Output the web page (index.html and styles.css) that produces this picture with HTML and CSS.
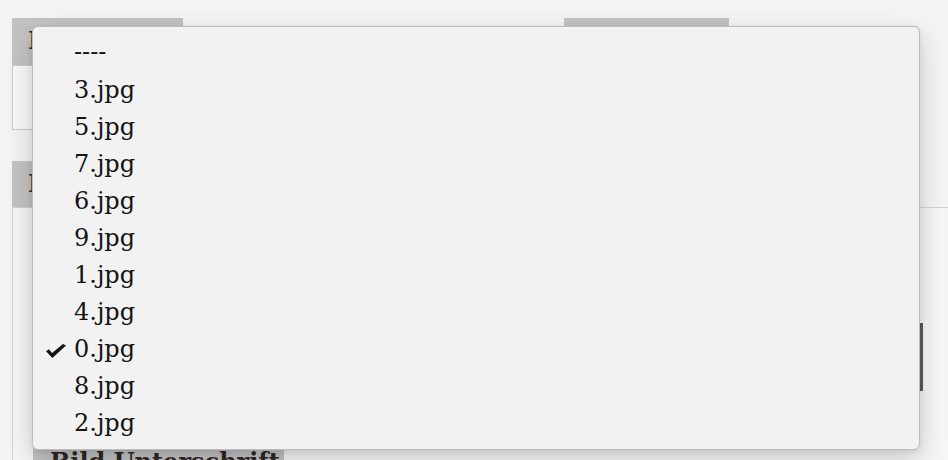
FILE: index.html
```html
<!DOCTYPE html>
<html lang="de">
<head>
<meta charset="utf-8">
<title>Bild auswählen</title>
<link rel="stylesheet" href="styles.css">
</head>
<body>
<div class="page">
  <div class="row1">
    <div class="field">
      <div class="label label-short">Bild</div>
      <div class="input"></div>
    </div>
    <div class="field">
      <div class="label label-right">Titel</div>
      <div class="input input-right"></div>
    </div>
  </div>
  <div class="section">
    <div class="label label-mid">Datei</div>
    <div class="box">
      <div class="upload-row">
        <div class="dark-btn"></div>
      </div>
      <div class="label label-caption">Bild Unterschrift</div>
    </div>
  </div>

  <ul class="menu">
    <li class="item item-first"><span class="check"></span><span>----</span></li>
    <li class="item"><span class="check"></span><span>3.jpg</span></li>
    <li class="item"><span class="check"></span><span>5.jpg</span></li>
    <li class="item"><span class="check"></span><span>7.jpg</span></li>
    <li class="item"><span class="check"></span><span>6.jpg</span></li>
    <li class="item"><span class="check"></span><span>9.jpg</span></li>
    <li class="item"><span class="check"></span><span>1.jpg</span></li>
    <li class="item"><span class="check"></span><span>4.jpg</span></li>
    <li class="item selected"><span class="check"><svg width="20" height="14" viewBox="0 0 20 14"><path d="M0 7.2 L3 5.3 L6 9.1 L17 0 L20 1.4 L6.4 14 Z" fill="#141414"/></svg></span><span>0.jpg</span></li>
    <li class="item"><span class="check"></span><span>8.jpg</span></li>
    <li class="item"><span class="check"></span><span>2.jpg</span></li>
  </ul>
</div>
</body>
</html>
```

FILE: styles.css
```css
html, body {
  margin: 0;
  padding: 0;
  width: 948px;
  height: 460px;
  overflow: hidden;
  background: #f4f4f4;
  font-family: "DejaVu Serif", "Liberation Serif", serif;
  color: #2f2828;
}

.page {
  position: relative;
  padding: 18px 0 0 12px;
}

.row1 {
  display: grid;
  grid-template-columns: 552px 384px;
}

.field {
  display: flex;
  flex-direction: column;
}

.label {
  background: #c3c3c3;
  font-size: 24px;
  font-weight: bold;
  line-height: 46px;
  height: 46px;
  padding: 0 16px;
  box-sizing: border-box;
  overflow: hidden;
  white-space: nowrap;
}

.label-short {
  width: 171px;
  height: 47px;
}

.label-right {
  width: 165px;
  height: 47px;
}

.label-mid {
  width: 171px;
}

.input {
  height: 65px;
  width: 500px;
  background: #f9f9f9;
  border: 1px solid #cdcdcd;
  box-sizing: border-box;
}

.input-right {
  width: 320px;
}

.section {
  margin-top: 31px;
}

.box {
  box-sizing: border-box;
  width: 942px;
  padding: 0 31px 0 20px;
  height: 260px;
  border: 1px solid #d2d2d2;
  border-right: none;
  background: #f6f6f6;
}

.upload-row {
  display: flex;
  justify-content: flex-end;
  margin-top: 115px;
}

.dark-btn {
  width: 220px;
  height: 68px;
  background: #615859;
}

.label-caption {
  margin-top: 54px;
  width: 251px;
  padding: 3px 17px 0;
  line-height: 28px;
  height: 46px;
}

.menu {
  position: absolute;
  left: 32px;
  top: 26px;
  width: 888px;
  height: 424px;
  box-sizing: border-box;
  margin: 0;
  padding: 6px 0 0 0;
  list-style: none;
  background: #f2f2f2;
  border: 1px solid #bcbcbc;
  border-radius: 6px;
  box-shadow: 0 10px 28px rgba(0, 0, 0, 0.18), 0 2px 6px rgba(0, 0, 0, 0.08);
  font-family: "DejaVu Serif", "Liberation Serif", serif;
  font-size: 24px;
  color: #141414;
}

.item {
  display: flex;
  align-items: center;
  height: 37px;
  line-height: 37px;
}

.item-first {
  height: 39px;
}

.check {
  width: 41px;
  flex: none;
  display: flex;
  align-items: center;
  padding-left: 13px;
  box-sizing: border-box;
}

.check svg {
  display: block;
  margin-top: 3px;
}
```
